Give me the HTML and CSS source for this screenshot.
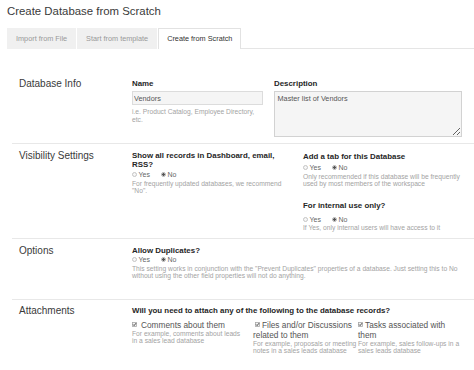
FILE: index.html
```html
<!DOCTYPE html>
<html>
<head>
<meta charset="utf-8">
<title>Create Database from Scratch</title>
<link rel="stylesheet" href="styles.css">
</head>
<body>
<h1 class="title">Create Database from Scratch</h1>
<div class="tabs">
  <div class="tab">Import from File</div>
  <div class="tab">Start from template</div>
  <div class="tab active">Create from Scratch</div>
  <div class="tab-fill"></div>
</div>
<div class="form">
  <section class="row row-info">
    <div class="sec-label">Database Info</div>
    <div class="info-grid">
      <div class="field">
        <div class="flabel">Name</div>
        <input class="text" type="text" value="Vendors">
        <div class="help help-name">i.e. Product Catalog, Employee Directory, etc.</div>
      </div>
      <div class="field">
        <div class="flabel">Description</div>
        <textarea class="area">Master list of Vendors</textarea>
      </div>
    </div>
  </section>

  <section class="row row-vis">
    <div class="sec-label">Visibility Settings</div>
    <div class="vis-grid">
      <div class="field">
        <div class="flabel">Show all records in Dashboard, email, RSS?</div>
        <div class="opts"><span class="opt"><span class="radio"></span>Yes</span><span class="opt"><span class="radio on"></span>No</span></div>
        <div class="help">For frequently updated databases, we recommend "No".</div>
      </div>
      <div class="field field-right">
        <div class="group">
          <div class="flabel">Add a tab for this Database</div>
          <div class="opts opts-mid"><span class="opt"><span class="radio"></span>Yes</span><span class="opt"><span class="radio on"></span>No</span></div>
          <div class="help">Only recommended if this database will be frequently used by most members of the workspace</div>
        </div>
        <div class="group group-2">
          <div class="flabel">For internal use only?</div>
          <div class="opts opts-wide"><span class="opt"><span class="radio"></span>Yes</span><span class="opt"><span class="radio on"></span>No</span></div>
          <div class="help">If Yes, only internal users will have access to it</div>
        </div>
      </div>
    </div>
  </section>

  <section class="row row-opt">
    <div class="sec-label">Options</div>
    <div class="field">
      <div class="flabel">Allow Duplicates?</div>
      <div class="opts opts-tight"><span class="opt"><span class="radio"></span>Yes</span><span class="opt"><span class="radio on"></span>No</span></div>
      <div class="help">This setting works in conjunction with the "Prevent Duplicates" properties of a database. Just setting this to No without using the other field properties will not do anything.</div>
    </div>
  </section>

  <section class="row row-att">
    <div class="sec-label">Attachments</div>
    <div class="field">
      <div class="flabel">Will you need to attach any of the following to the database records?</div>
      <div class="checks">
        <div class="check check-1">
          <div class="cklabel"><svg class="ck" width="5" height="5" viewBox="0 0 5 5"><rect x="0.5" y="0.5" width="4" height="4" fill="#f4f4f4" stroke="#a8a8a8" stroke-width="0.8"/><path d="M1.1 2.5 L2.1 3.6 L4 1.2" fill="none" stroke="#333" stroke-width="0.9"/></svg>Comments about them</div>
          <div class="help">For example, comments about leads in a sales lead database</div>
        </div>
        <div class="check check-2">
          <div class="cklabel"><svg class="ck" width="5" height="5" viewBox="0 0 5 5"><rect x="0.5" y="0.5" width="4" height="4" fill="#f4f4f4" stroke="#a8a8a8" stroke-width="0.8"/><path d="M1.1 2.5 L2.1 3.6 L4 1.2" fill="none" stroke="#333" stroke-width="0.9"/></svg>Files and/or Discussions related to them</div>
          <div class="help">For example, proposals or meeting notes in a sales leads database</div>
        </div>
        <div class="check check-3">
          <div class="cklabel"><svg class="ck" width="5" height="5" viewBox="0 0 5 5"><rect x="0.5" y="0.5" width="4" height="4" fill="#f4f4f4" stroke="#a8a8a8" stroke-width="0.8"/><path d="M1.1 2.5 L2.1 3.6 L4 1.2" fill="none" stroke="#333" stroke-width="0.9"/></svg>Tasks associated with them</div>
          <div class="help">For example, sales follow-ups in a sales leads database</div>
        </div>
      </div>
    </div>
  </section>
</div>
</body>
</html>
```

FILE: styles.css
```css
* { box-sizing: border-box; }
html, body { margin: 0; padding: 0; background: #fff; }
body {
  font-family: "Liberation Sans", Arial, Helvetica, sans-serif;
  color: #333;
  width: 474px;
  height: 370px;
  overflow: hidden;
}
.title {
  margin: 4px 0 0 7px;
  font-size: 11.4px;
  line-height: 14px;
  font-weight: normal;
  color: #3a3a3a;
}
.tabs {
  display: flex;
  margin: 10px 0 0 7px;
  height: 21px;
}
.tab {
  padding: 0 9px;
  height: 21px;
  line-height: 21px;
  font-size: 7.3px;
  color: #999;
  background: #f0f0f0;
  margin-right: 1px;
  white-space: nowrap;
}
.tab.active {
  background: #fff;
  color: #333;
  border: 1px solid #e2e2e2;
  border-bottom: none;
  line-height: 20px;
  padding: 0 8px;
  margin-right: 0;
}
.tab-fill {
  flex: 1;
  border-bottom: 1px solid #e5e5e5;
}
.form { margin: 23px 0 0 12px; }
.row {
  display: grid;
  grid-template-columns: 113px 1fr;
  padding: 7px 12px 6px 7px;
  border-bottom: 1px solid #e8e8e8;
}
.row-vis { padding-bottom: 6px; }
.row-opt { padding-bottom: 19px; }
.row-att { padding-top: 6px; border-bottom: none; }
.sec-label {
  font-size: 10px;
  line-height: 10px;
  color: #3a3a3a;
}
.flabel {
  font-size: 7.9px;
  line-height: 9px;
  font-weight: bold;
  color: #262626;
}
.help {
  font-size: 6.7px;
  line-height: 7.5px;
  color: #a3a3a3;
}
.help-name { margin-top: 3px; }
.info-grid {
  display: grid;
  grid-template-columns: 131px 188px;
  column-gap: 11px;
}
.text {
  display: block;
  width: 131px;
  height: 14px;
  margin: 3px 0 0;
  border: 1px solid #dcdcdc;
  background: #f5f5f5;
  font: 7.3px "Liberation Sans", Arial, sans-serif;
  color: #555;
  padding: 0 1px;
  outline: none;
}
.area {
  display: block;
  width: 188px;
  height: 46px;
  margin: 3px 0 0;
  border: 1px solid #d2d2d2;
  background: #f5f5f5;
  font: 7.3px/9px "Liberation Sans", Arial, sans-serif;
  color: #555;
  padding: 2px 2.5px;
  resize: both;
  outline: none;
}
.vis-grid {
  display: grid;
  grid-template-columns: 158px 159px;
  column-gap: 13px;
}
.field-right { padding-top: 1px; }
.group-2 { margin-top: 13.5px; }
.opts {
  font-size: 7px;
  line-height: 8.5px;
  color: #666;
  margin-top: 2px;
  white-space: nowrap;
}
.opts-mid { margin-top: 3px; }
.opts-wide { margin-top: 5.5px; }
.opts-tight { margin-top: 1.6px; }
.opt { margin-right: 11px; }
.radio {
  display: inline-block;
  width: 5px;
  height: 5px;
  border-radius: 50%;
  border: 1px solid #c4c4c4;
  background: #f7f7f7;
  margin-right: 1.5px;
  vertical-align: 0;
}
.radio.on {
  border-color: #b0b0b0;
  background: radial-gradient(circle, #555 0, #555 1.1px, #f7f7f7 1.6px);
}
.checks {
  display: grid;
  grid-template-columns: 121px 105px 1fr;
  margin-top: 5px;
}
.check-1 { padding-right: 11px; }
.cklabel {
  font-size: 8.3px;
  line-height: 10px;
  color: #555;
}
.ck {
  display: inline-block;
  vertical-align: 1px;
  margin-right: 2px;
}
.check-1 .ck { margin-right: 4px; }
.check-2 .ck { margin-left: 2px; }
```
